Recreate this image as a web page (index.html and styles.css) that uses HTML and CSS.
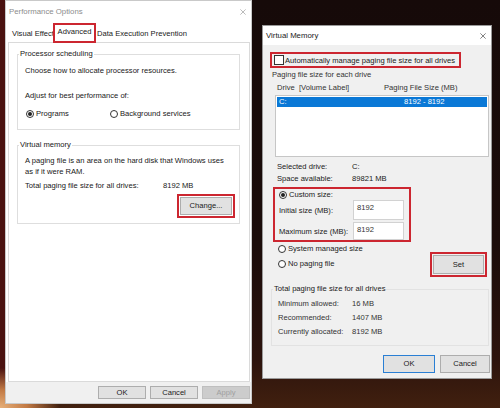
FILE: index.html
```html
<!DOCTYPE html>
<html lang="en">
<head>
    <meta charset="UTF-8">
    <meta name="viewport" content="width=device-width, initial-scale=1.0">
    <title>Performance Options</title>
    <link rel="stylesheet" href="styles.css">
</head>
<body>
    <div class="desktop">
        <!-- Performance Options (inactive window) -->
        <div class="window perf">
            <div class="titlebar inactive">
                <span class="title">Performance Options</span>
                <svg class="close" width="8" height="8" viewBox="0 0 8 8"><path d="M0.5 0.5L7.5 7.5M7.5 0.5L0.5 7.5"/></svg>
            </div>
            <div class="tabs">
                <div class="tab first">Visual Effects</div>
                <div class="tab active mark">Advanced</div>
                <div class="tab">Data Execution Prevention</div>
            </div>
            <div class="tab-panel">
                <fieldset class="group cpu">
                    <legend>Processor scheduling</legend>
                    <p class="choose">Choose how to allocate processor resources.</p>
                    <p class="adjust">Adjust for best performance of:</p>
                    <div class="radio-row">
                        <span class="radio checked"><i></i>Programs</span>
                        <span class="radio"><i></i>Background services</span>
                    </div>
                </fieldset>
                <fieldset class="group vmem">
                    <legend>Virtual memory</legend>
                    <p class="about">A paging file is an area on the hard disk that Windows uses<br>as if it were RAM.</p>
                    <div class="total">
                        <span class="total-label">Total paging file size for all drives:</span>
                        <span>8192 MB</span>
                    </div>
                    <div class="change-row">
                        <span class="mark"><button class="btn change">Change...</button></span>
                    </div>
                </fieldset>
            </div>
            <div class="footer">
                <button class="btn">OK</button>
                <button class="btn">Cancel</button>
                <button class="btn" disabled>Apply</button>
            </div>
        </div>

        <!-- Virtual Memory dialog -->
        <div class="window vm">
            <div class="titlebar">
                <span class="title">Virtual Memory</span>
                <svg class="close" width="8" height="8" viewBox="0 0 8 8"><path d="M0.5 0.5L7.5 7.5M7.5 0.5L0.5 7.5"/></svg>
            </div>
            <div class="vm-body">
                <div class="mark auto">
                    <span class="check"></span>Automatically manage paging file size for all drives
                </div>
                <div class="drives">
                    <div class="section-label">Paging file size for each drive</div>
                    <div class="list-head">
                        <span class="col-drive">Drive&nbsp;&nbsp;[Volume Label]</span>
                        <span>Paging File Size (MB)</span>
                    </div>
                    <div class="list">
                        <div class="list-row selected">
                            <span class="col-drive">C:</span>
                            <span class="col-size">8192 - 8192</span>
                        </div>
                    </div>
                    <div class="info">
                        <span>Selected drive:</span><span>C:</span>
                        <span>Space available:</span><span>89821 MB</span>
                    </div>
                    <div class="mark custom">
                        <span class="radio checked"><i></i>Custom size:</span>
                        <div class="size-field first">
                            <span>Initial size (MB):</span>
                            <span class="input">8192</span>
                        </div>
                        <div class="size-field">
                            <span>Maximum size (MB):</span>
                            <span class="input">8192</span>
                        </div>
                    </div>
                    <div class="choice-row">
                        <div class="choices">
                            <span class="radio"><i></i>System managed size</span>
                            <span class="radio"><i></i>No paging file</span>
                        </div>
                        <span class="mark set-mark"><button class="btn set">Set</button></span>
                    </div>
                </div>
                <fieldset class="group totals">
                    <legend>Total paging file size for all drives</legend>
                    <div class="totals-grid">
                        <span>Minimum allowed:</span><span>16 MB</span>
                        <span>Recommended:</span><span>1407 MB</span>
                        <span>Currently allocated:</span><span>8192 MB</span>
                    </div>
                </fieldset>
                <div class="actions">
                    <button class="btn default">OK</button>
                    <button class="btn">Cancel</button>
                </div>
            </div>
        </div>
    </div>
</body>
</html>
```

FILE: styles.css
```css
* {
    box-sizing: border-box;
}
body {
    margin: 0;
    width: 500px;
    height: 408px;
    overflow: hidden;
    font-family: "Liberation Sans", Arial, sans-serif;
    font-size: 7.6px;
    color: #202020;
    background: #1a0b09;
}
p {
    margin: 0;
}
.desktop {
    position: relative;
    width: 500px;
    height: 408px;
    background:
        radial-gradient(ellipse 60px 40px at 0% 100%, #e7b07a 0%, #c27a45 45%, rgba(120, 50, 20, 0) 100%),
        linear-gradient(to right, #4a1210 0, #4a1210 5px, transparent 5px),
        linear-gradient(to bottom, #160a09 0%, #1b0c0a 60%, #2c130d 88%, #41200f 100%);
}

/* windows */
.window {
    position: absolute;
    display: flex;
    flex-direction: column;
    border: 1px solid #c9c9c9;
}
.perf {
    left: 5px;
    top: 0;
    width: 247px;
    height: 404px;
    background: #fff;
}
.vm {
    left: 262px;
    top: 25px;
    width: 230px;
    height: 354px;
    background: #f0f0f0;
    border-color: #9a9a9a;
}
.titlebar {
    display: flex;
    align-items: center;
    justify-content: space-between;
    height: 21px;
    padding: 0 5px 0 3px;
    background: #fff;
    color: #1a1a1a;
    font-size: 7.8px;
    flex-shrink: 0;
}
.vm .titlebar {
    height: 19px;
}
.titlebar.inactive {
    color: #8c8c8c;
}
.close {
    width: 6px;
    height: 6px;
    fill: none;
    stroke: #444;
    stroke-width: 0.9;
}
.inactive .close {
    stroke: #9a9a9a;
}

/* highlight boxes */
.mark {
    border: 2px solid #cc2630;
}

/* tabs */
.tabs {
    display: flex;
    align-items: flex-end;
    height: 20px;
    padding-left: 6px;
    flex-shrink: 0;
}
.tab {
    height: 15px;
    line-height: 13px;
    white-space: nowrap;
}
.tab.first {
    width: 41px;
}
.tab.active {
    height: 20px;
    width: 43px;
    line-height: 14px;
    text-align: center;
    background: #fff;
    position: relative;
    z-index: 1;
    top: 1px;
}
.tab.active + .tab {
    padding-left: 1px;
}
.tab-panel {
    flex: 1;
    margin: 0 1px 0 2px;
    padding: 6px 9px 0 8px;
    border: 1px solid #dadada;
    background: #fff;
}

/* group boxes */
.group {
    margin: 0;
    padding: 0 4px 0 7px;
    border: 1px solid #dedede;
    min-width: 0;
}
.group legend {
    margin-left: -6px;
    padding: 0 1px;
    line-height: 10px;
}
.cpu {
    padding-bottom: 10px;
}
.cpu .choose {
    margin-top: 6px;
    line-height: 11px;
}
.cpu .adjust {
    margin-top: 14px;
    line-height: 11px;
}
.radio-row {
    display: grid;
    grid-template-columns: 84px auto;
    margin-top: 7px;
    padding-left: 1px;
    line-height: 11px;
}
.radio {
    display: flex;
    align-items: center;
    white-space: nowrap;
}
.radio i {
    width: 8px;
    height: 8px;
    margin-right: 2px;
    border: 1px solid #333;
    border-radius: 50%;
    background: #fff;
    display: flex;
    align-items: center;
    justify-content: center;
}
.radio.checked i::after {
    content: "";
    width: 4px;
    height: 4px;
    border-radius: 50%;
    background: #222;
}
.vmem {
    margin-top: 10px;
    padding-bottom: 5px;
}
.vmem .about {
    margin-top: 5px;
    line-height: 11px;
}
.total {
    display: grid;
    grid-template-columns: 138px auto;
    margin-top: 3px;
    line-height: 11px;
}
.change-row {
    display: flex;
    justify-content: flex-end;
    margin-top: 3px;
}
.change-row .mark {
    padding: 1px;
}

/* buttons */
.btn {
    font: inherit;
    color: #1a1a1a;
    background: #e1e1e1;
    border: 1px solid #adadad;
    padding: 0;
    height: 18px;
    line-height: 16px;
}
.btn.change {
    width: 52px;
}
.btn:disabled {
    background: #cccccc;
    border-color: #bfbfbf;
    color: #a0a0a0;
}
.footer {
    display: flex;
    justify-content: flex-end;
    gap: 4px;
    height: 21px;
    padding: 4px 1px 0 0;
    background: #f0f0f0;
    flex-shrink: 0;
}
.footer .btn {
    width: 48px;
    height: 13px;
    line-height: 11px;
}

/* virtual memory dialog */
.vm-body {
    flex: 1;
    padding: 7px 2px 0 7px;
}
.auto {
    display: flex;
    align-items: center;
    width: 191px;
    height: 16px;
    padding-left: 2px;
    white-space: nowrap;
}
.check {
    width: 10px;
    height: 10px;
    margin-right: 1px;
    border: 1px solid #333;
    background: #fff;
}
.section-label {
    margin-top: 2px;
    line-height: 10px;
    padding-left: 2px;
    color: #333;
}
.list-head {
    display: flex;
    margin-top: 3px;
    padding-left: 7px;
    line-height: 10px;
    color: #333;
}
.col-drive {
    width: 107px;
}
.list {
    margin: 2px 0 0 5px;
    width: 214px;
    height: 62px;
    padding: 1px;
    background: #fff;
    border: 1px solid #c6c6c6;
}
.list-row {
    display: flex;
    height: 10px;
    line-height: 10px;
    padding-left: 2px;
}
.list-row.selected {
    background: #0a78d6;
    color: #fff;
}
.col-size {
    padding-left: 18px;
}
.info {
    display: grid;
    grid-template-columns: 75px auto;
    margin-top: 4px;
    padding-left: 7px;
    line-height: 12px;
}
.custom {
    margin: 2px 0 0 3px;
    width: 138px;
    padding: 1px 5px 0 4px;
}
.custom .radio {
    height: 10px;
    line-height: 10px;
}
.size-field {
    display: grid;
    grid-template-columns: 74px 51px;
    align-items: center;
    height: 18px;
    margin-top: 2px;
}
.size-field.first {
    height: 20px;
    margin-top: 0;
}
.input {
    height: 100%;
    padding: 2px 0 0 3px;
    background: #fff;
    border: 1px solid #d2d2d2;
    color: #333;
}
.choice-row {
    display: flex;
    justify-content: space-between;
    align-items: flex-start;
}
.choices {
    display: flex;
    flex-direction: column;
    gap: 3px;
    margin-top: 1px;
    padding-left: 8px;
    line-height: 12px;
}
.set-mark {
    margin: 10px 2px 0 0;
    padding: 1px;
}
.btn.set {
    width: 51px;
    height: 19px;
}
.totals {
    margin: 7px 0 0 1px;
    padding: 3px 4px 6px 6px;
    border-color: #e2e2e2;
}
.totals legend {
    margin-left: -5px;
}
.totals-grid {
    display: grid;
    grid-template-columns: 74px auto;
    line-height: 14px;
    color: #333;
}
.actions {
    display: flex;
    justify-content: flex-end;
    gap: 5px;
    margin: 9px -1px 0 0;
}
.actions .btn {
    width: 50px;
}
.actions .btn.default {
    width: 52px;
    border-color: #2a7fd4;
}
```
